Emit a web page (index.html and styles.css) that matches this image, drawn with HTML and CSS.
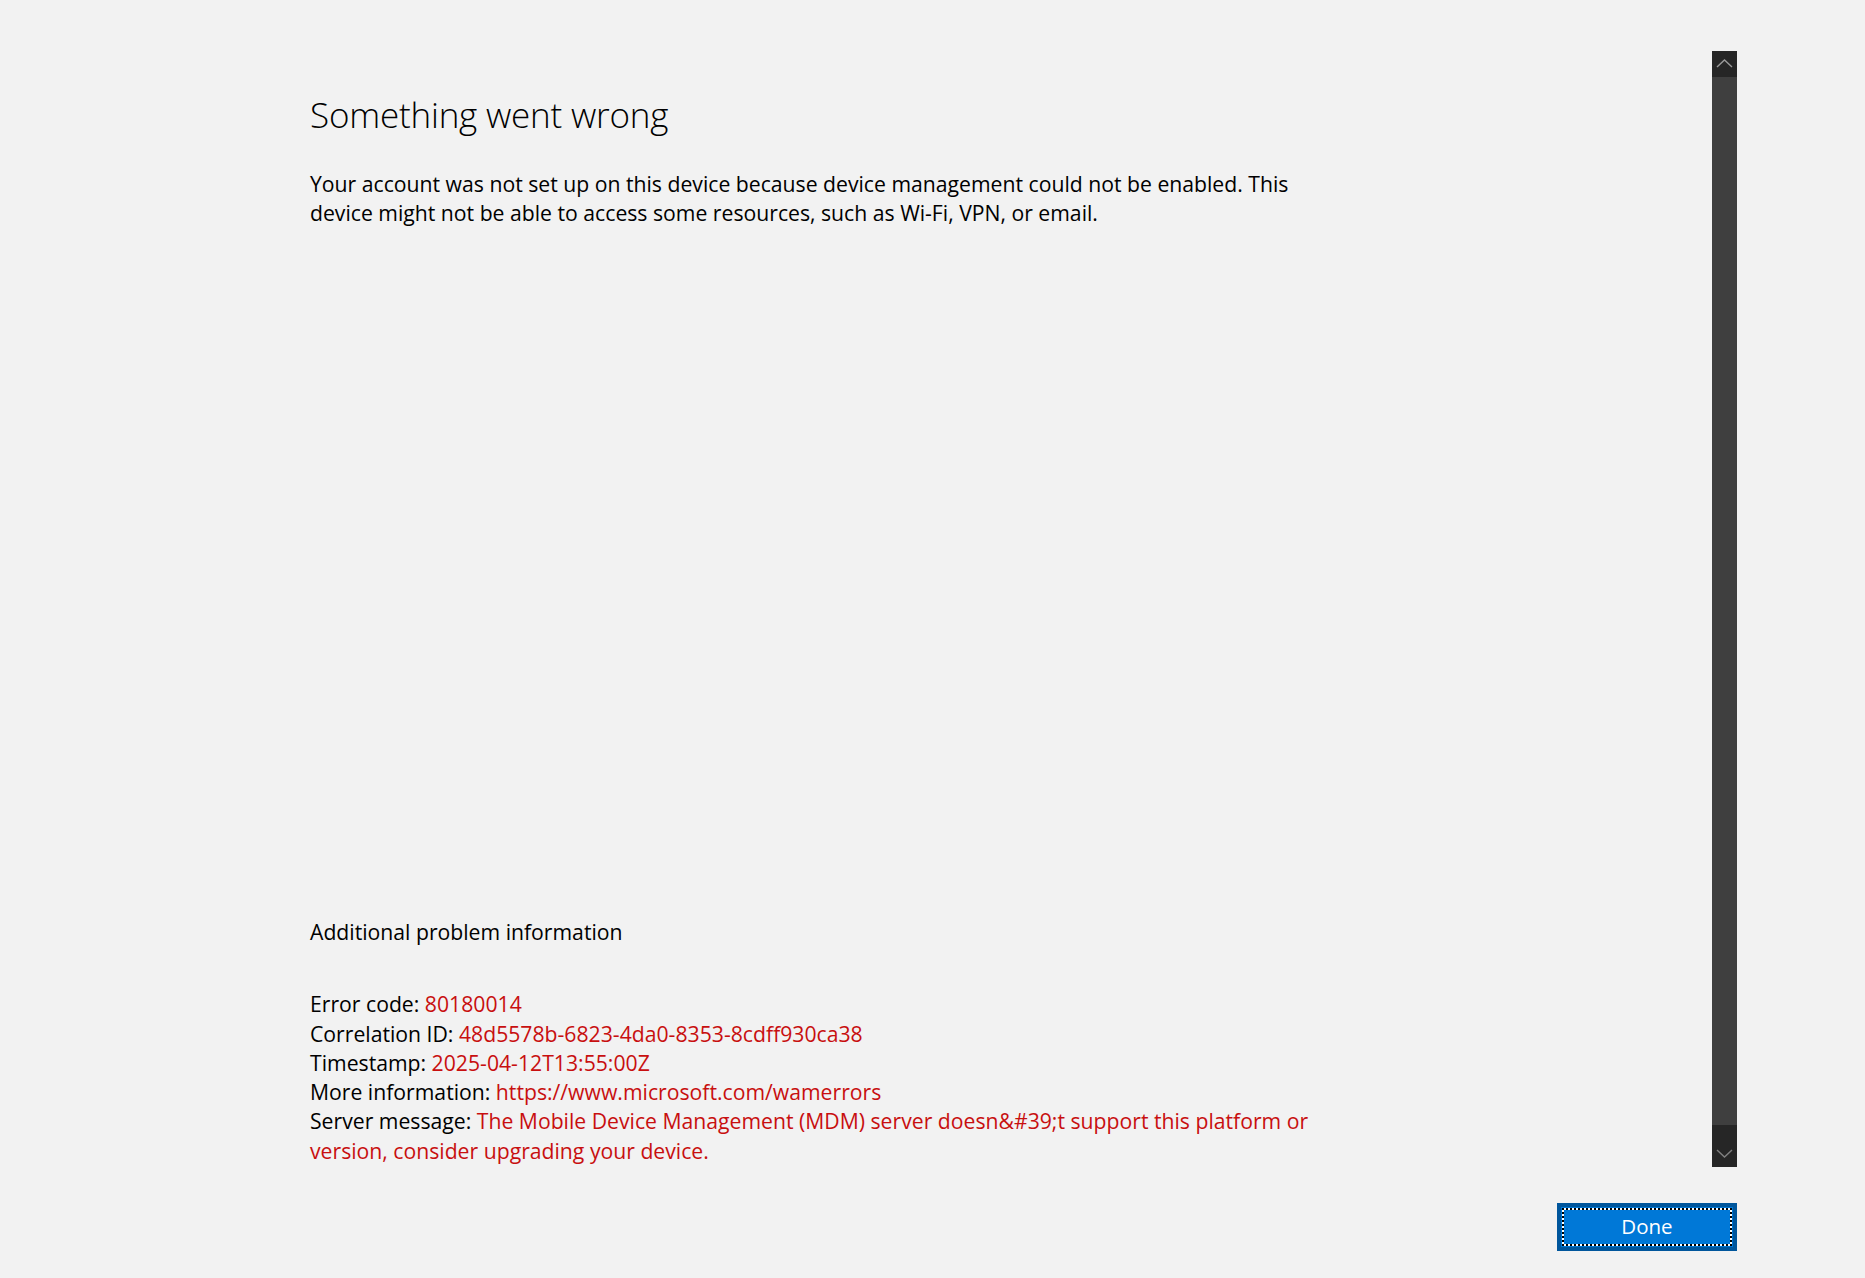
FILE: index.html
```html
<!DOCTYPE html>
<html lang="en">
<head>
<meta charset="utf-8">
<title>Something went wrong</title>
<link rel="stylesheet" href="styles.css">
</head>
<body>
<div class="frame">
  <div class="scroll-area">
    <main class="content">
      <h1 class="title">Something went wrong</h1>
      <p class="message">Your account was not set up on this device because device management could not be enabled. This device might not be able to access some resources, such as Wi-Fi, VPN, or email.</p>
      <section class="info">
        <h2 class="info-title">Additional problem information</h2>
        <ul class="details">
          <li>Error code: <span class="val">80180014</span></li>
          <li>Correlation ID: <span class="val">48d5578b-6823-4da0-8353-8cdff930ca38</span></li>
          <li>Timestamp: <span class="val">2025-04-12T13:55:00Z</span></li>
          <li>More information: <span class="val">https://www.microsoft.com/wamerrors</span></li>
          <li>Server message: <span class="val">The Mobile Device Management (MDM) server doesn&amp;#39;t support this platform or version, consider upgrading your device.</span></li>
        </ul>
      </section>
    </main>
    <div class="scrollbar">
      <div class="sb-btn sb-up">
        <svg width="25" height="26" viewBox="0 0 25 26"><polyline points="5,16 12.5,9 20,16" fill="none" stroke="#9a9a9a" stroke-width="1.4"/></svg>
      </div>
      <div class="sb-track"></div>
      <div class="sb-btn sb-down">
        <svg width="25" height="42" viewBox="0 0 25 42"><polyline points="5,25 12.5,32 20,25" fill="none" stroke="#808080" stroke-width="1.4"/></svg>
      </div>
    </div>
  </div>
  <div class="footer">
    <button class="done-btn"><span class="focus-rect"></span>Done</button>
  </div>
</div>
</body>
</html>
```
FILE: styles.css
```css
html, body {
  margin: 0;
  padding: 0;
  background: #f2f2f2;
  height: 100%;
}

body {
  font-family: "Open Sans", "Noto Sans", sans-serif;
  color: #000;
}

.frame {
  display: flex;
  flex-direction: column;
  height: 100vh;
  padding: 51px 128px 0 310px;
  box-sizing: border-box;
}

.scroll-area {
  display: flex;
  height: 1116px;
}

.content {
  flex: 1;
  display: flex;
  flex-direction: column;
  padding-top: 42px;
  padding-bottom: 2px;
  padding-right: 382px;
}

.title {
  margin: 0;
  font-size: 35px;
  line-height: 44px;
  font-weight: 300;
  letter-spacing: -0.2px;
}

.message {
  margin: 32px 0 0;
  font-size: 21.2px;
  line-height: 29.3px;
}

.info {
  margin-top: auto;
}

.info-title {
  margin: 0;
  font-size: 21.2px;
  line-height: 29.3px;
  font-weight: 400;
}

.details {
  list-style: none;
  margin: 43px 0 0;
  padding: 0;
  font-size: 21.2px;
  line-height: 29.3px;
}

.val {
  color: #c80f0f;
}

.scrollbar {
  width: 25px;
  display: flex;
  flex-direction: column;
  background: #3f3f3f;
}

.sb-btn {
  background: #262626;
  display: flex;
}

.sb-up { height: 26px; }
.sb-down { height: 42px; }

.sb-track {
  flex: 1;
  background: #3f3f3f;
}

.footer {
  display: flex;
  justify-content: flex-end;
  margin-top: 36px;
}

.done-btn {
  position: relative;
  width: 180px;
  height: 48px;
  box-sizing: border-box;
  border: 4px solid #00569c;
  background: #0078d7;
  color: #fff;
  font-family: "Open Sans", "Noto Sans", sans-serif;
  font-size: 20.5px;
  padding: 0 0 2px;
  cursor: pointer;
}

.focus-rect {
  position: absolute;
  inset: 1px;
  pointer-events: none;
  background:
    repeating-linear-gradient(90deg, #000 0 2px, #fff 2px 4px) top left / 100% 2px no-repeat,
    repeating-linear-gradient(90deg, #000 0 2px, #fff 2px 4px) bottom left / 100% 2px no-repeat,
    repeating-linear-gradient(180deg, #000 0 2px, #fff 2px 4px) top left / 2px 100% no-repeat,
    repeating-linear-gradient(180deg, #000 0 2px, #fff 2px 4px) top right / 2px 100% no-repeat;
}
```
